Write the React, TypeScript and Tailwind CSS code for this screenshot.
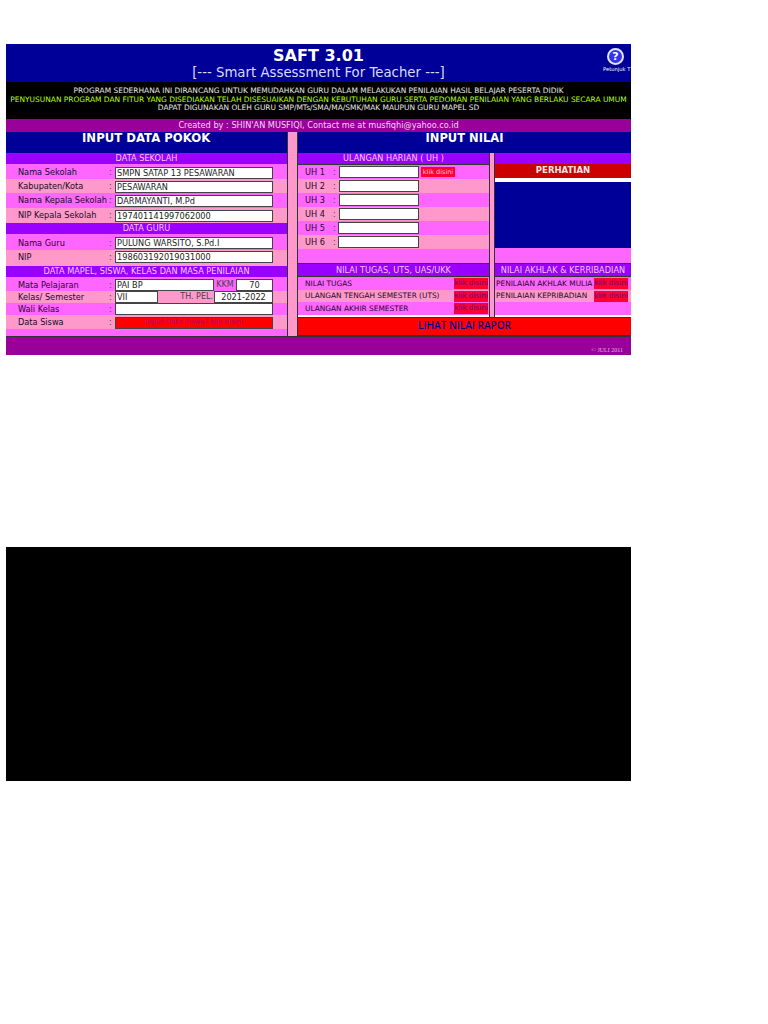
const font = "font-['DejaVu_Sans',sans-serif]"

function Field({ text = '', className = 'w-[158px]', center = false }: { text?: string; className?: string; center?: boolean }) {
  return (
    <div
      className={`h-[12px] bg-white border border-[#444] text-[8.2px] leading-[10px] text-[#222] px-px overflow-hidden whitespace-nowrap shrink-0 ${center ? 'text-center' : ''} ${className}`}
    >
      {text}
    </div>
  )
}

function SectionHead({ children, className = 'h-[11px]' }: { children: string; className?: string }) {
  return (
    <div className={`bg-[#9900ff] text-[#f3c9ff] text-[8.2px] flex items-center justify-center whitespace-nowrap ${className}`}>
      {children}
    </div>
  )
}

function Row({ label, pink, h = 'h-[14px]', extra = '', children }: { label: string; pink?: boolean; h?: string; extra?: string; children: React.ReactNode }) {
  return (
    <div className={`flex items-center ${h} ${extra} ${pink ? 'bg-[#ff99cc]' : 'bg-[#ff66ff]'}`}>
      <div className="w-[103px] pl-[12px] text-[8.2px] text-[#1a0a2a] whitespace-nowrap overflow-hidden shrink-0">{label}</div>
      <div className="w-[6px] text-[8.2px] text-[#444] shrink-0">:</div>
      {children}
    </div>
  )
}

function UhRow({ label, pink, link, narrow }: { label: string; pink?: boolean; link?: boolean; narrow?: boolean }) {
  return (
    <div className={`flex items-center h-[14px] ${pink ? 'bg-[#ff99cc]' : 'bg-[#ff66ff]'}`}>
      <div className="w-[35px] pl-[7px] text-[8.2px] text-[#1a0a2a] whitespace-nowrap shrink-0">{label}</div>
      <div className={`${narrow ? 'w-[5px]' : 'w-[6px]'} text-[8.2px] text-[#444] shrink-0`}>:</div>
      <Field className={narrow ? 'w-[81px]' : 'w-[80px]'} />
      {link && <div className="ml-[2px] h-[10px] w-[34px] bg-[#ff0033] text-[#ffc0d0] text-[6.5px] leading-[10px] text-center">klik disini</div>}
    </div>
  )
}

function ScoreRow({ label, pink, h = 'h-[13px]', pad = 'pl-[7px]', mr = 'mr-px' }: { label: string; pink?: boolean; h?: string; pad?: string; mr?: string }) {
  return (
    <div className={`flex items-center justify-between ${h} ${pink ? 'bg-[#ff99cc]' : 'bg-[#ff66ff]'}`}>
      <div className={`${pad} text-[7.4px] text-[#1a0a2a] whitespace-nowrap`}>{label}</div>
      <div className={`h-[11px] w-[34px] bg-[#ff0033] text-[#550088] text-[7.2px] leading-[10px] text-center whitespace-nowrap shrink-0 ${mr}`}>klik disini</div>
    </div>
  )
}

export default function App() {
  return (
    <div className={`min-h-[1024px] bg-white pt-[44px] pl-[6px] ${font}`}>
      <div className="w-[625px]">
        {/* header */}
        <div className="relative h-[38px] bg-[#000099] text-white text-center overflow-hidden">
          <div className="text-[16px] leading-[22px] font-bold pt-[1px]">SAFT 3.01</div>
          <div className="text-[13.3px] leading-[14px] text-[#d8dcff] -mt-[1px]">[--- Smart Assessment For Teacher ---]</div>
          <div className="absolute left-[601px] top-[4px] w-[17px] h-[17px] rounded-full bg-[#3333ee] border-2 border-[#dfe4ff] text-white text-[11px] leading-[13px] font-bold">?</div>
          <div className="absolute left-[597px] top-[22px] text-[5.2px] leading-[6px] whitespace-nowrap">Petunjuk T</div>
        </div>

        <div className="h-[37px] bg-black text-center text-[7.45px] leading-[8.5px] pt-[5px] whitespace-nowrap overflow-hidden">
          <div className="text-[#e8e8e8]">PROGRAM SEDERHANA INI DIRANCANG UNTUK MEMUDAHKAN GURU DALAM MELAKUKAN PENILAIAN HASIL BELAJAR PESERTA DIDIK</div>
          <div className="text-[#b6ff00]">PENYUSUNAN PROGRAM DAN FITUR YANG DISEDIAKAN TELAH DISESUAIKAN DENGAN KEBUTUHAN GURU SERTA PEDOMAN PENILAIAN YANG BERLAKU SECARA UMUM</div>
          <div className="text-[#e8e8e8]">DAPAT DIGUNAKAN OLEH GURU SMP/MTs/SMA/MA/SMK/MAK MAUPUN GURU MAPEL SD</div>
        </div>

        <div className="h-[13px] bg-[#990099] text-[#f0d8f0] text-[8.2px] leading-[13px] text-center whitespace-nowrap">
          Created by : SHIN'AN MUSFIQI, Contact me at musfiqhi@yahoo.co.id
        </div>

        <div className="flex h-[204px]">
          {/* left column */}
          <div className="w-[281px] shrink-0 flex flex-col">
            <div className="h-[21px] bg-[#000099] text-white text-[11.7px] font-bold leading-[13px] pl-[76px] whitespace-nowrap">INPUT DATA POKOK</div>
            <SectionHead>DATA SEKOLAH</SectionHead>
            <Row label="Nama Sekolah" h="h-[15px]" extra="pt-[2px]"><Field text="SMPN SATAP 13 PESAWARAN" /></Row>
            <Row label="Kabupaten/Kota" pink extra="pt-px"><Field text="PESAWARAN" /></Row>
            <Row label="Nama Kepala Sekolah" h="h-[15px]"><Field text="DARMAYANTI, M.Pd" /></Row>
            <Row label="NIP Kepala Sekolah" pink h="h-[15px]"><Field text="197401141997062000" /></Row>
            <SectionHead>DATA GURU</SectionHead>
            <Row label="Nama Guru" h="h-[16px]" extra="pt-[2px]"><Field text="PULUNG WARSITO, S.Pd.I" /></Row>
            <Row label="NIP" pink h="h-[16px]" extra="pb-[2px]"><Field text="198603192019031000" /></Row>
            <SectionHead>DATA MAPEL, SISWA, KELAS DAN MASA PENILAIAN</SectionHead>
            <Row label="Mata Pelajaran" h="h-[14px]" extra="pt-[2px]">
              <Field text="PAI BP" className="w-[99px]" />
              <div className="w-[22px] text-[8px] text-[#444] text-center shrink-0">KKM</div>
              <Field text="70" center className="w-[37px]" />
            </Row>
            <Row label="Kelas/ Semester" h="h-[12px]" pink>
              <Field text="VII" className="w-[43px]" />
              <div className="w-[56px] text-[8px] text-[#444] text-right pr-px shrink-0 h-[12px] leading-[12px]">TH. PEL.</div>
              <Field text="2021-2022" center className="w-[59px]" />
            </Row>
            <Row label="Wali Kelas" h="h-[12px]"><Field /></Row>
            <Row label="Data Siswa" pink h="h-[14px]" extra="pt-px">
              <div className="w-[158px] h-[12px] bg-[#ff0000] border border-[#444] text-[#aa0088] text-[7px] leading-[9px] text-center shrink-0">Input Data Siswa? klik disini</div>
            </Row>
            <div className="h-[7px] bg-[#ff66ff]" />
          </div>

          <div className="w-[11px] shrink-0 bg-[#ff99cc] border-x border-[#333]" />

          {/* right column */}
          <div className="flex-1 flex flex-col">
            <div className="h-[21px] bg-[#000099] text-white text-[11.5px] font-bold leading-[13px] text-center whitespace-nowrap">INPUT NILAI</div>
            <div className="flex-1 flex">
              <div className="w-[191px] shrink-0 flex flex-col">
                <SectionHead className="h-[12px] border-b border-[#333]">ULANGAN HARIAN ( UH )</SectionHead>
                <UhRow label="UH 1" link />
                <UhRow label="UH 2" pink />
                <UhRow label="UH 3" />
                <UhRow label="UH 4" pink />
                <UhRow label="UH 5" narrow />
                <UhRow label="UH 6" pink narrow />
                <div className="h-[14px] bg-[#ff66ff]" />
                <SectionHead className="h-[14px] border-y border-[#333]">NILAI TUGAS, UTS, UAS/UKK</SectionHead>
                <ScoreRow label="NILAI TUGAS" />
                <ScoreRow label="ULANGAN TENGAH SEMESTER (UTS)" pink h="h-[12px]" />
                <ScoreRow label="ULANGAN AKHIR SEMESTER" />
              </div>
              <div className="w-[6px] shrink-0 bg-[#ff99cc] border-x border-[#333]" />
              <div className="flex-1 flex flex-col">
                <div className="h-[11px] bg-[#9900ff]" />
                <div className="h-[14px] bg-[#cc0000] text-[#ffe8e8] text-[8.5px] font-bold leading-[12px] text-center">PERHATIAN</div>
                <div className="h-[4px] bg-white" />
                <div className="h-[66px] bg-[#000099]" />
                <div className="h-[15px] bg-[#ff66ff]" />
                <SectionHead className="h-[14px] border-y border-[#333]">NILAI AKHLAK &amp; KERRIBADIAN</SectionHead>
                <ScoreRow label="PENILAIAN AKHLAK MULIA" pad="pl-px" mr="mr-[3px]" />
                <ScoreRow label="PENILAIAN KEPRIBADIAN" pink h="h-[12px]" pad="pl-px" mr="mr-[3px]" />
                <div className="h-[13px] bg-[#ff66ff]" />
              </div>
            </div>
            <div className="h-[19px] bg-[#ff0000] border-y border-[#333] text-[#000099] text-[10px] font-['Open_Sans',sans-serif] font-semibold leading-[15px] text-center">LIHAT NILAI RAPOR</div>
          </div>
        </div>

        <div className="h-[19px] bg-[#990099] border-t border-[#333] text-[#e0b8e0] text-[6px] font-['Liberation_Serif',serif] leading-[6px] text-right pr-[8px] pt-[10px]">© JULI 2011</div>

        <div className="h-[234px] mt-[192px] bg-black" />
      </div>
    </div>
  )
}
